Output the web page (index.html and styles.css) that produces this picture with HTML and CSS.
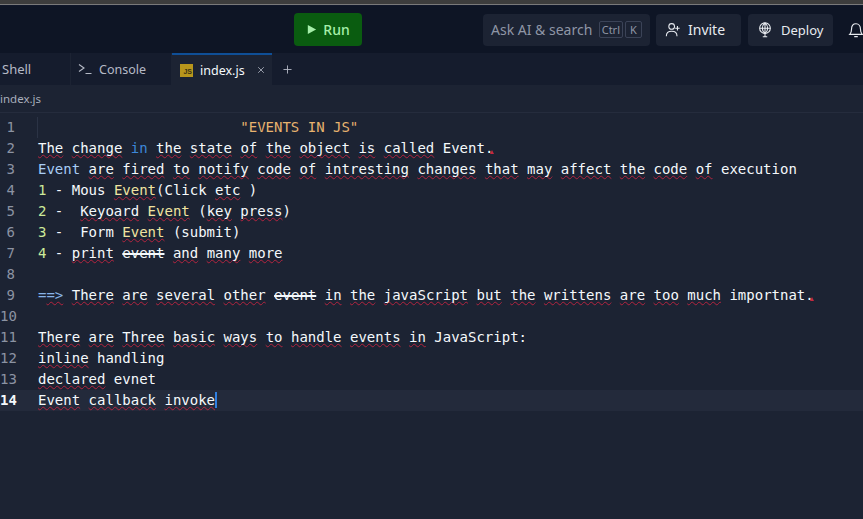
FILE: index.html
```html
<!DOCTYPE html>
<html lang="en">
<head>
<meta charset="utf-8">
<title>index.js</title>
<link rel="stylesheet" href="styles.css">
</head>
<body>
<div class="top-strip"></div>
<header class="header">
  <button class="run"><svg class="run-icon" viewBox="0 0 12 12"><path d="M2 1l9 5-9 5z"/></svg>Run</button>
  <div class="search">Ask AI &amp; search<span class="keys"><kbd>Ctrl</kbd><kbd>K</kbd></span></div>
  <button class="action invite"><svg class="ico" viewBox="0 0 18 18"><circle cx="7.5" cy="5" r="3.2"/><path d="M1.500 16c0-3.600 2.600-5.500 6-5.500s6 1.900 6 5.500M14 4.500v5M11.500 7h5"/></svg>Invite</button>
  <button class="action deploy"><svg class="ico" viewBox="0 0 18 18"><circle cx="9" cy="7" r="6"/><path d="M3 7h12M9 1v16M9 1c-4 3.500-4 8.500 0 12M9 1c4 3.500 4 8.500 0 12M6.500 16.500h5"/></svg><span class="deploy-label">Deploy</span></button>
  <svg class="bell" viewBox="0 0 18 18"><path d="M2 14h14c-1.500-1.500-2-3-2-6 0-3.500-2-6-5-6S4 4.500 4 8c0 3-.5 4.500-2 6zM7 16.500h4"/></svg>
</header>
<nav class="tabs">
  <div class="tab shell">Shell</div>
  <div class="tab console"><svg class="term" viewBox="0 0 14 12"><path d="M1 1.500l5 3.500-5 3.500M7.500 10.500h6"/></svg>Console</div>
  <div class="tab active"><span class="js-badge">JS</span><span class="tab-name">index.js</span><svg class="close" viewBox="0 0 10 10"><path d="M1.500 1.500l7 7M8.500 1.500l-7 7"/></svg></div>
  <svg class="plus" viewBox="0 0 10 10"><path d="M5 .5v9M.5 5h9"/></svg>
</nav>
<div class="crumb">index.js</div>
<main class="editor">
  <div class="line"><span class="num">1</span><span class="code guide">                        <span class="str">"EVENTS IN JS"</span></span></div>
  <div class="line"><span class="num">2</span><span class="code"><u>The</u> <u>change</u> <span class="kw">in</span> <u>the</u> <u>state</u> <u>of</u> <u>the</u> <u>object</u> <u>is</u> <u>called</u> Event<u class="dot">.</u></span></div>
  <div class="line"><span class="num">3</span><span class="code"><span class="type">Event</span> <u>are</u> <u>fired</u> <u>to</u> <u>notify</u> <u>code</u> <u>of</u> <u>intresting</u> <u>changes</u> <u>that</u> <u>may</u> <u>affect</u> <u>the</u> <u>code</u> <u>of</u> execution</span></div>
  <div class="line"><span class="num">4</span><span class="code"><span class="n">1</span> - Mous <u class="fn">Event</u>(Click <u>etc</u> )</span></div>
  <div class="line"><span class="num">5</span><span class="code"><span class="n">2</span> -  <u>Keyoard</u> <u class="fn">Event</u> (<u>key</u> <u>press</u>)</span></div>
  <div class="line"><span class="num">6</span><span class="code"><span class="n">3</span> -  Form <u class="fn">Event</u> (submit)</span></div>
  <div class="line"><span class="num">7</span><span class="code"><span class="n">4</span> - <u>print</u> <s>event</s> <u>and</u> <u>many</u> <u>more</u></span></div>
  <div class="line"><span class="num">8</span><span class="code"></span></div>
  <div class="line"><span class="num">9</span><span class="code"><span class="op">=<u>=&gt;</u></span> <u>There</u> <u>are</u> <u>several</u> <u>other</u> <s>event</s> <u>in</u> <u>the</u> <u>javaScript</u> <u>but</u> <u>the</u> <u>writtens</u> <u>are</u> <u>too</u> <u>much</u> importnat<u class="dot">.</u></span></div>
  <div class="line"><span class="num">10</span><span class="code"></span></div>
  <div class="line"><span class="num">11</span><span class="code"><u>There</u> <u>are</u> <u>Three</u> <u>basic</u> <u>ways</u> <u>to</u> <u>handle</u> <u>events</u> <u>in</u> JavaScript:</span></div>
  <div class="line"><span class="num">12</span><span class="code"><u>inline</u> handling</span></div>
  <div class="line"><span class="num">13</span><span class="code"><u>declared</u> evnet</span></div>
  <div class="line current"><span class="num">14</span><span class="code"><u>Event</u> <u>callback</u> <u>invoke</u><span class="caret"></span></span></div>
</main>
</body>
</html>
```
FILE: styles.css
```css
* { box-sizing: border-box; }
html, body { margin: 0; height: 100%; }
body {
  width: 863px;
  height: 519px;
  overflow: hidden;
  background: #1c2333;
  color: #f5f9fc;
  font-family: "Noto Sans", sans-serif;
  display: flex;
  flex-direction: column;
}
.top-strip {
  height: 6px;
  flex: none;
  background: linear-gradient(#3d3d3d 0 4px, #7a7a7a 4px 5px, #10172a 5px);
}
.header {
  height: 47px;
  flex: none;
  background: #0e1525;
  display: flex;
  align-items: center;
  padding: 0 0 0 294px;
  gap: 6px;
}
button { font: inherit; border: 0; cursor: pointer; }
.run {
  flex: none;
  width: 68px;
  height: 33px;
  margin-right: 115px;
  background: #0a5c10;
  color: #a5efa9;
  border-radius: 4px;
  font-size: 14px;
  font-weight: 500;
  display: flex;
  align-items: center;
  justify-content: center;
  gap: 6px;
  padding: 0;
}
.run-icon { width: 11px; height: 11px; fill: #a5efa9; }
.search {
  flex: none;
  width: 167px;
  height: 32px;
  background: #1c2333;
  color: #8f96a6;
  border-radius: 4px;
  font-size: 14px;
  display: flex;
  align-items: center;
  justify-content: space-between;
  padding: 0 8px;
}
.keys { display: flex; gap: 2px; }
kbd {
  font-family: inherit;
  font-size: 11px;
  line-height: 15px;
  padding: 0 2px;
  min-width: 17px;
  text-align: center;
  border: 1px solid #3b4357;
  border-radius: 2px;
  color: #8f96a6;
}
.action {
  flex: none;
  height: 32px;
  width: 85px;
  background: #1c2333;
  color: #e8ebf0;
  border-radius: 4px;
  font-size: 14px;
  display: flex;
  align-items: center;
  padding: 0 0 0 9px;
  gap: 7px;
}
.action.deploy { margin-left: 1px; gap: 8px; }
.deploy-label { font-size: 13px; }
.ico { width: 16px; height: 16px; fill: none; stroke: #e8ebf0; stroke-width: 1.200; flex: none; }
.bell { flex: none; width: 16px; height: 18px; margin-left: 9px; fill: none; stroke: #e8ebf0; stroke-width: 1.300; }
.tabs {
  height: 32px;
  flex: none;
  background: #151c2d;
  display: flex;
  align-items: stretch;
  font-size: 12.500px;
  color: #b5bac6;
}
.tab { display: flex; align-items: center; flex: none; border-right: 1px solid #1c2333; }
.shell { width: 71px; padding-left: 2px; font-size: 13px; }
.console { width: 101px; padding-left: 7px; gap: 7px; }
.term { width: 14px; height: 12px; fill: none; stroke: #b5bac6; stroke-width: 1.100; }
.active {
  width: 100px;
  background: #1c2333;
  border-top: 2px solid #0f4f97;
  border-right: 0;
  padding-left: 8px;
  color: #f5f9fc;
}
.js-badge {
  width: 13px;
  height: 13px;
  background: #b8961c;
  color: #3c3312;
  font: 700 7px/16px "Liberation Sans", sans-serif;
  text-align: right;
  padding-right: 1px;
  flex: none;
  margin-right: 7px;
  overflow: hidden;
}
.tab-name { flex: none; width: 57px; }
.close { width: 8px; height: 8px; fill: none; stroke: #b5bac6; stroke-width: 1; }
.plus { width: 9px; height: 9px; margin: 12px 0 0 11px; fill: none; stroke: #b5bac6; stroke-width: 1; }
.crumb {
  height: 28px;
  flex: none;
  background: #1c2333;
  border-bottom: 1px solid #252c3d;
  font-size: 11.500px;
  line-height: 28px;
  color: #a8aebb;
}
.editor {
  flex: 1;
  padding-top: 4px;
  font-family: "DejaVu Sans Mono", monospace;
  font-size: 14px;
  line-height: 21px;
}
.line { display: flex; height: 21px; }
.current { background: #232a3b; }
.num { width: 15px; flex: none; text-align: right; color: #8c93a3; margin-right: 23px; }
.current .num { color: #f5f9fc; font-weight: 700; }
.code { flex: 1; color: #f5f9fc; white-space: pre; }
.guide { border-left: 1px solid #2b3345; margin-left: -1px; }
u { text-decoration: underline wavy #b3243f 1px; text-underline-offset: 1px; text-decoration-skip-ink: none; }
.dot { text-decoration: none; position: relative; }
.dot::after {
  content: "";
  position: absolute;
  left: 5px;
  bottom: 2px;
  border-left: 2.500px solid transparent;
  border-right: 2.500px solid transparent;
  border-bottom: 4px solid #c5283f;
}
s { text-decoration: line-through 1.500px; }
.str { color: #e8b36f; }
.kw { color: #3d88d9; }
.type { color: #a8cdf5; }
.fn { color: #f0e3a0; }
.n { color: #cdea9a; }
.op { color: #88b4e8; }
.caret { display: inline-block; width: 2px; height: 16px; background: #2f7fe0; vertical-align: -3px; }
```
